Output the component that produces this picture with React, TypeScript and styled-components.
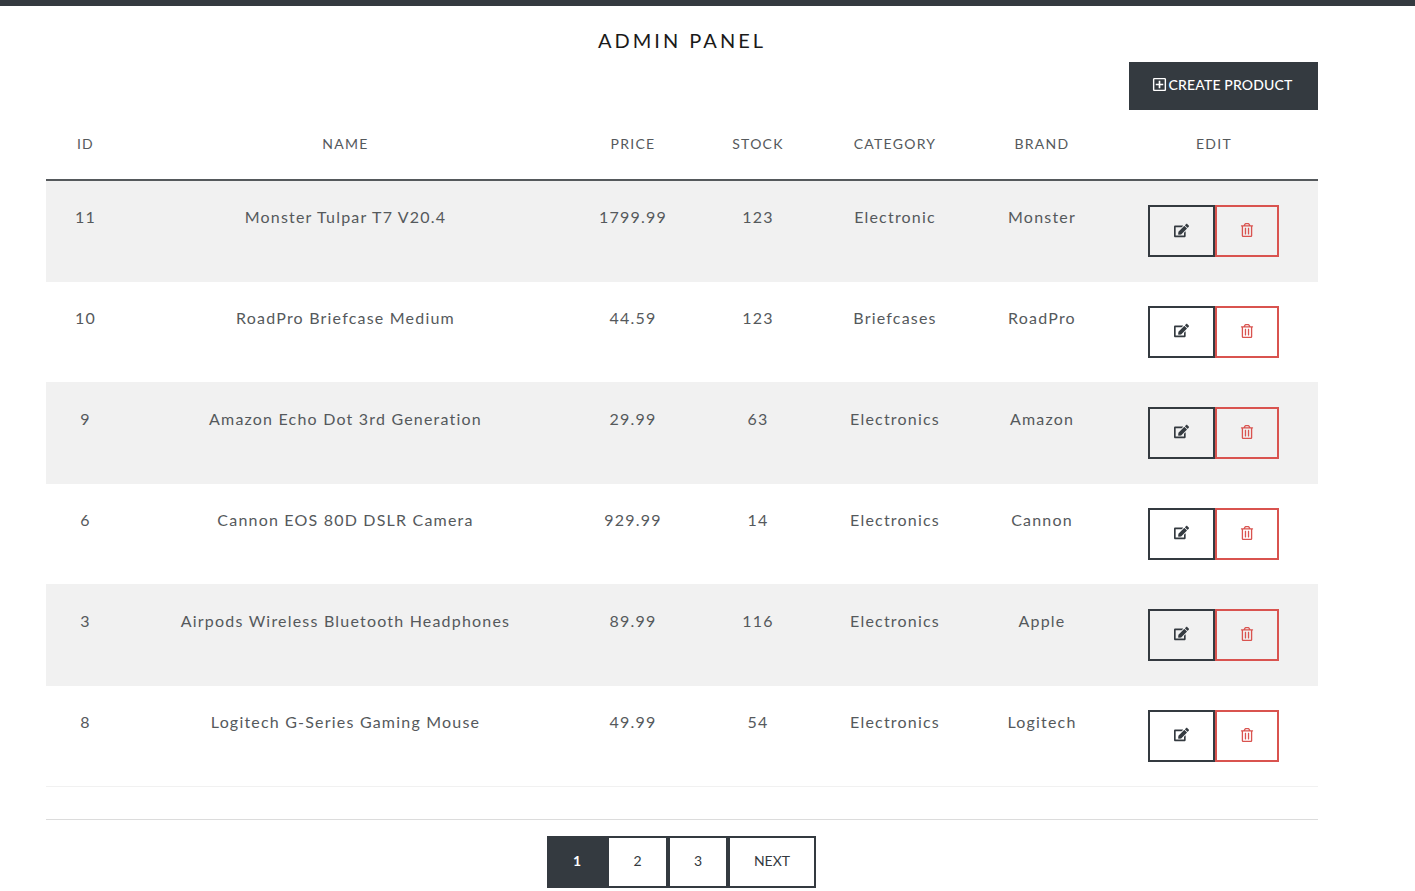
import { createGlobalStyle, styled } from "styled-components";
import { FaEdit, FaRegPlusSquare, FaRegTrashAlt } from "react-icons/fa";

const products = [
  { id: 11, name: "Monster Tulpar T7 V20.4", price: "1799.99", stock: 123, category: "Electronic", brand: "Monster" },
  { id: 10, name: "RoadPro Briefcase Medium", price: "44.59", stock: 123, category: "Briefcases", brand: "RoadPro" },
  { id: 9, name: "Amazon Echo Dot 3rd Generation", price: "29.99", stock: 63, category: "Electronics", brand: "Amazon" },
  { id: 6, name: "Cannon EOS 80D DSLR Camera", price: "929.99", stock: 14, category: "Electronics", brand: "Cannon" },
  { id: 3, name: "Airpods Wireless Bluetooth Headphones", price: "89.99", stock: 116, category: "Electronics", brand: "Apple" },
  { id: 8, name: "Logitech G-Series Gaming Mouse", price: "49.99", stock: 54, category: "Electronics", brand: "Logitech" },
];

const columns = [
  { label: "ID", width: 79 },
  { label: "NAME", width: 441 },
  { label: "PRICE", width: 134 },
  { label: "STOCK", width: 116 },
  { label: "CATEGORY", width: 158 },
  { label: "BRAND", width: 136 },
  { label: "EDIT", width: 208 },
];

const pages = [
  { label: "1", width: 60, active: true },
  { label: "2", width: 61 },
  { label: "3", width: 60 },
  { label: "NEXT", width: 88 },
];

const App = () => {
  return (
    <>
      <GlobalStyle />
      <TopBar />
      <Container>
        <Title>ADMIN PANEL</Title>
        <Actions>
          <CreateButton>
            <FaRegPlusSquare size={15} />
            CREATE PRODUCT
          </CreateButton>
        </Actions>
        <Table>
          <colgroup>
            {columns.map((c) => (
              <col key={c.label} width={c.width} />
            ))}
          </colgroup>
          <thead>
            <tr>
              {columns.map((c) => (
                <Th key={c.label}>{c.label}</Th>
              ))}
            </tr>
          </thead>
          <tbody>
            {products.map((p) => (
              <Row key={p.id}>
                <Td>{p.id}</Td>
                <Td>{p.name}</Td>
                <Td>{p.price}</Td>
                <Td>{p.stock}</Td>
                <Td>{p.category}</Td>
                <Td>{p.brand}</Td>
                <ActionCell>
                  <ButtonGroup>
                    <EditButton>
                      <FaEdit size={15} />
                    </EditButton>
                    <DeleteButton>
                      <FaRegTrashAlt size={14} />
                    </DeleteButton>
                  </ButtonGroup>
                </ActionCell>
              </Row>
            ))}
          </tbody>
        </Table>
        <Divider />
        <Pagination>
          {pages.map((p) => (
            <PageItem key={p.label} $active={p.active} $width={p.width}>
              {p.label}
            </PageItem>
          ))}
        </Pagination>
      </Container>
    </>
  );
};

const GlobalStyle = createGlobalStyle`
  html, body {
    margin: 0;
    background: #fff;
    font-family: "Lato", "Open Sans", sans-serif;
    color: #55595c;
  }
`;

const TopBar = styled.div`
  height: 6px;
  background: #343a40;
`;

const Container = styled.div`
  width: 1272px;
  margin-left: 46px;
`;

const Title = styled.h1`
  margin: 0;
  padding-top: 22px;
  height: 56px;
  box-sizing: border-box;
  font-size: 20px;
  line-height: 24px;
  font-weight: 400;
  letter-spacing: 3px;
  text-align: center;
  color: #1a1a1a;
`;

const Actions = styled.div`
  display: flex;
  justify-content: flex-end;
`;

const CreateButton = styled.button`
  display: flex;
  align-items: center;
  justify-content: center;
  gap: 1px;
  width: 189px;
  height: 48px;
  border: 0;
  padding: 0 2px 3px 0;
  background: #343a40;
  color: #fff;
  font-family: inherit;
  font-size: 14px;
  font-weight: 500;
  letter-spacing: 0.17px;
`;

const Table = styled.table`
  width: 1272px;
  table-layout: fixed;
  border-collapse: collapse;
`;

const Th = styled.th`
  height: 67px;
  padding: 0 0 2px;
  border-bottom: 2px solid #55595c;
  font-size: 14px;
  font-weight: 400;
  letter-spacing: 1.25px;
  text-align: center;
  color: #55595c;
`;

const Row = styled.tr`
  height: 101px;
  border-bottom: 1px solid #f1f1f1;

  &:nth-child(odd) {
    background: #f1f1f1;
  }
`;

const Td = styled.td`
  padding: 26px 0 0;
  vertical-align: top;
  font-size: 16px;
  line-height: 20px;
  letter-spacing: 1.2px;
  text-align: center;
  color: #55595c;
`;

const ActionCell = styled.td`
  padding: 24px 0 0 38px;
  vertical-align: top;
`;

const ButtonGroup = styled.div`
  display: flex;
`;

const EditButton = styled.button`
  display: flex;
  align-items: center;
  justify-content: center;
  width: 67px;
  height: 52px;
  padding: 0 0 2px;
  border: 2px solid #343a40;
  background: transparent;
  color: #343a40;
`;

const DeleteButton = styled(EditButton)`
  width: 64px;
  padding: 0 1px 2px 0;
  border-color: #d9534f;
  color: #d9534f;
`;

const Divider = styled.hr`
  margin: 32px 0 16px;
  border: 0;
  border-top: 1px solid #dcdcdc;
`;

const Pagination = styled.ul`
  display: flex;
  justify-content: center;
  list-style: none;
  margin: 0;
  padding: 0 1px 3px 0;
`;

const PageItem = styled.li<{ $active?: boolean; $width: number }>`
  display: flex;
  align-items: center;
  justify-content: center;
  box-sizing: border-box;
  width: ${(p) => p.$width}px;
  height: 52px;
  padding-bottom: 2px;
  border: 2px solid #343a40;
  background: ${(p) => (p.$active ? "#343a40" : "#fff")};
  color: ${(p) => (p.$active ? "#fff" : "#343a40")};
  font-size: 14px;
  font-weight: ${(p) => (p.$active ? 700 : 400)};
`;

export default App;
